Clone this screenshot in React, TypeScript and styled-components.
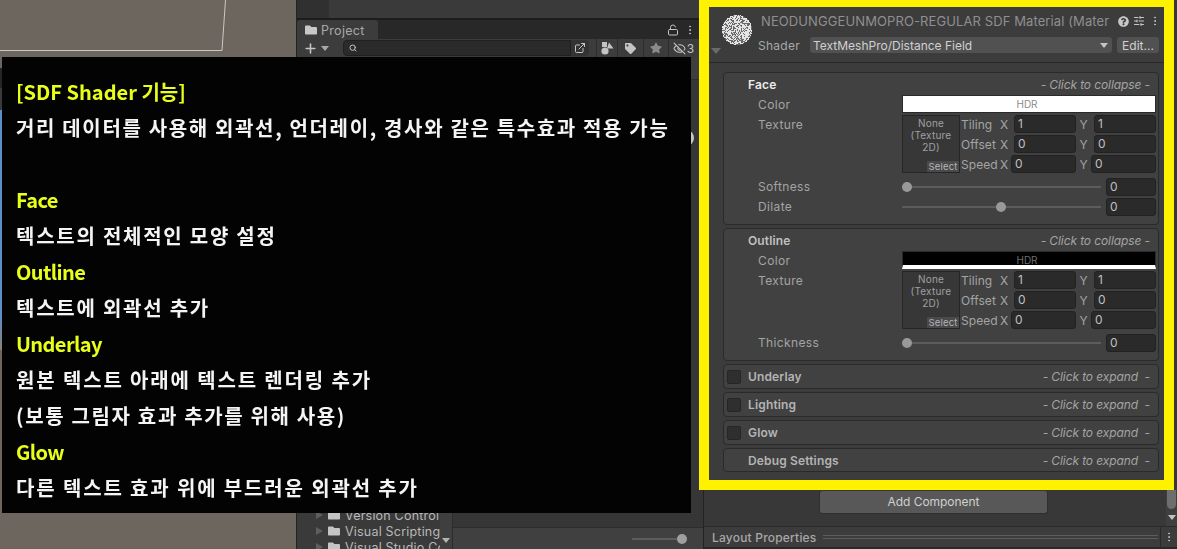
import React from "react";
import styled, { createGlobalStyle } from "styled-components";
import { FaFolder, FaQuestionCircle, FaStar, FaTag } from "react-icons/fa";
import {
  EllipsisVertical,
  ExternalLink,
  EyeOff,
  LockOpen,
  Plus,
  Search,
  SlidersHorizontal,
} from "lucide-react";

const GlobalStyle = createGlobalStyle`
  html, body {
    margin: 0;
    padding: 0;
    background: #383838;
  }
  * {
    box-sizing: border-box;
  }
`;

const Page = styled.div`
  position: relative;
  display: flex;
  width: 1177px;
  height: 549px;
  overflow: hidden;
  font-family: Inter, "Liberation Sans", sans-serif;
  font-size: 12px;
  color: #b4b4b4;
`;

/* scene view on the left */
const SceneColumn = styled.div`
  display: flex;
  flex-direction: column;
  width: 296px;
  flex-shrink: 0;
`;

const SceneTop = styled.div`
  height: 68px;
  background: #6c665f;
`;

const SceneLines = styled.svg`
  display: block;
`;

const SceneToolbar = styled.div`
  height: 42px;
  background: linear-gradient(#262626 0 20px, #3a3a3a 20px);
`;

const SceneSky = styled.div`
  height: 240px;
  background: linear-gradient(#5f8dc6 85%, #85837c);
`;

const SceneGround = styled.div`
  flex: 1;
  background: #6c665f;
`;

/* project window */
const ProjectColumn = styled.div`
  display: flex;
  flex-direction: column;
  width: 408px;
  flex-shrink: 0;
  background: #3a3a3a;
  border-left: 1px solid #232323;
  border-right: 1px solid #232323;
`;

const TopPanel = styled.div`
  height: 18px;
  background: #3a3a3a;
`;

const TopPanelTab = styled.div`
  width: 32px;
  height: 18px;
  background: #303030;
`;

const TabBar = styled.div`
  display: flex;
  align-items: center;
  height: 21px;
  background: #282828;
  border-top: 2px solid #1d1d1d;
  padding-right: 5px;
`;

const ProjectTab = styled.div`
  display: flex;
  align-items: center;
  gap: 4px;
  width: 81px;
  height: 19px;
  padding: 1px 0 0 8px;
  background: #3c3c3c;
  border-radius: 3px 3px 0 0;
  color: #a8a8a8;
  font-size: 12.5px;
  letter-spacing: 0.3px;
`;

const TabIcons = styled.div`
  display: flex;
  align-items: center;
  gap: 5px;
  margin-left: auto;
  margin-right: 2px;
  color: #c4c4c4;
`;

const Toolbar = styled.div`
  display: flex;
  align-items: center;
  height: 18px;
  padding-left: 6px;
  background: #3c3c3c;
  color: #c4c4c4;
`;

const Caret = styled.span<{ $size?: number; $color?: string }>`
  display: inline-block;
  width: 0;
  height: 0;
  flex-shrink: 0;
  border-left: ${({ $size = 4 }) => $size}px solid transparent;
  border-right: ${({ $size = 4 }) => $size}px solid transparent;
  border-top: ${({ $size = 4 }) => $size + 1}px solid ${({ $color = "#a8a8a8" }) => $color};
`;

const SearchField = styled.div`
  display: flex;
  align-items: center;
  width: 228px;
  height: 16px;
  margin-left: 14px;
  padding-left: 5px;
  background: #2a2a2a;
  border: 1px solid #202020;
  border-radius: 4px 0 0 4px;
`;

const SearchEnd = styled.div`
  display: flex;
  align-items: center;
  justify-content: center;
  width: 18px;
  height: 16px;
  background: #333333;
  border-radius: 0 4px 4px 0;
  color: #c8c8c8;
`;

const ToolbarGap = styled.span<{ $width: number }>`
  width: ${({ $width }) => $width}px;
  flex-shrink: 0;
`;

const FilterButton = styled.div<{ $width: number; $dim?: boolean }>`
  display: flex;
  align-items: center;
  justify-content: center;
  gap: 1px;
  width: ${({ $width }) => $width}px;
  height: 18px;
  border-left: 1px solid #2c2c2c;
  background: #3c3c3c;
  color: ${({ $dim }) => ($dim ? "#8a8a8a" : "#c4c4c4")};
  font-size: 12px;
`;

const ProjectBody = styled.div`
  flex: 1;
  display: flex;
`;

const TreePanel = styled.div`
  display: flex;
  flex-direction: column;
  justify-content: flex-end;
  width: 143px;
  padding-left: 19px;
  overflow: hidden;
`;

const TreeRow = styled.div<{ $last?: boolean }>`
  display: flex;
  align-items: center;
  gap: 5px;
  flex-shrink: 0;
  height: 16px;
  margin-bottom: ${({ $last }) => ($last ? "-6px" : "0")};
  color: #b8b8b8;
  font-size: 12.5px;
  white-space: nowrap;
  letter-spacing: 0.2px;
  svg {
    flex-shrink: 0;
  }
`;

const TreeArrow = styled.span`
  flex-shrink: 0;
  width: 0;
  height: 0;
  border-top: 4px solid transparent;
  border-bottom: 4px solid transparent;
  border-left: 7px solid #5e5e5e;
`;

const TreeScroll = styled.div`
  display: flex;
  flex-direction: column;
  justify-content: flex-end;
  align-items: center;
  width: 13px;
  padding-bottom: 6px;
  background: #3f3f3f;
  border-right: 1px solid #2c2c2c;
`;

const AssetPanel = styled.div`
  position: relative;
  flex: 1;
  display: flex;
  flex-direction: column;
  justify-content: space-between;
  background: #363636;
`;

const AssetHeader = styled.div`
  height: 23px;
  background: #3e3e3e;
  border-bottom: 1px solid #2c2c2c;
`;

const AssetKnob = styled.div`
  position: absolute;
  left: 225px;
  top: 73px;
  width: 16px;
  height: 16px;
  border-radius: 50%;
  background: #c8c8c8;
`;

const AssetFooter = styled.div`
  display: flex;
  align-items: center;
  justify-content: flex-end;
  height: 22px;
  padding-right: 21px;
  background: #404040;
  border-top: 1px solid #2c2c2c;
`;

const ZoomTrack = styled.div`
  position: relative;
  width: 50px;
  height: 2px;
  background: #5c5c5c;
`;

const ZoomKnob = styled.div`
  position: absolute;
  right: -5px;
  top: -4px;
  width: 10px;
  height: 10px;
  border-radius: 50%;
  background: #a0a0a0;
`;

/* inspector */
const InspectorColumn = styled.div`
  display: flex;
  flex-direction: column;
  width: 473px;
  flex-shrink: 0;
`;

const Frame = styled.div`
  position: relative;
  z-index: 1;
  width: 475px;
  height: 490px;
  margin-left: -5px;
  padding-bottom: 8px;
  background: #3c3c3c;
  border-style: solid;
  border-color: #fff200;
  border-width: 7px 10px 10px 10px;
`;

const MaterialHeader = styled.div`
  display: flex;
  height: 56px;
  padding-right: 5px;
  border-bottom: 1px solid #282828;
`;

const ThumbColumn = styled.div`
  display: flex;
  flex-direction: column;
  width: 49px;
  flex-shrink: 0;
  padding: 8px 0 0 2px;
`;

const NoiseThumb = styled.svg`
  display: block;
  margin: 0 0 3px 11px;
`;

const HeaderMain = styled.div`
  flex: 1;
  min-width: 0;
  padding-top: 5px;
`;

const TitleRow = styled.div`
  display: flex;
  align-items: center;
  height: 18px;
  padding-left: 3px;
  color: #8f8f8f;
  font-size: 13px;
  letter-spacing: 0.1px;
`;

const Title = styled.div`
  width: 349px;
  white-space: nowrap;
`;

const TitleIcons = styled.div`
  display: flex;
  align-items: center;
  gap: 4px;
  margin: 0 -2px 0 auto;
  color: #c8c8c8;
`;

const ShaderRow = styled.div`
  display: flex;
  align-items: center;
  height: 16px;
  margin-top: 7px;
  color: #a8a8a8;
`;

const ShaderLabel = styled.div`
  width: 52px;
  letter-spacing: 0.25px;
`;

const Dropdown = styled.div`
  display: flex;
  align-items: center;
  justify-content: space-between;
  width: 302px;
  height: 16px;
  padding: 0 4px 0 3px;
  background: #515151;
  border-radius: 3px;
  color: #d0d0d0;
`;

const EditButton = styled.div`
  display: flex;
  align-items: center;
  justify-content: center;
  width: 42px;
  height: 16px;
  margin-left: 5px;
  background: #515151;
  border-radius: 3px;
  color: #d0d0d0;
`;

const Groups = styled.div`
  display: flex;
  flex-direction: column;
  gap: 3px;
  margin: 9px 5px 0 14px;
`;

const Group = styled.div<{ $collapsed?: boolean; $height?: number }>`
  height: ${({ $collapsed, $height = 25 }) => ($collapsed ? `${$height}px` : "auto")};
  padding-bottom: ${({ $collapsed }) => ($collapsed ? "0" : "8px")};
  background: #414141;
  border: 1px solid #2a2a2a;
  border-radius: 4px;
`;

const GroupHead = styled.div<{ $height?: number }>`
  display: flex;
  align-items: center;
  height: ${({ $height = 22 }) => $height}px;
  padding: 0 8px 0 24px;
`;

const GroupTitle = styled.div<{ $color?: string }>`
  color: ${({ $color = "#b4b4b4" }) => $color};
  font-weight: 600;
  letter-spacing: 0.15px;
`;

const GroupHint = styled.div`
  margin-left: auto;
  color: #a4a4a4;
  font-style: italic;
  letter-spacing: -0.1px;
`;

const CheckBox = styled.div`
  width: 14px;
  height: 14px;
  margin: 0 7px 0 -21px;
  background: #2f2f2f;
  border: 1px solid #262626;
  border-radius: 2px;
`;

const PropRow = styled.div<{ $top?: number }>`
  display: grid;
  grid-template-columns: 178px 254px;
  margin-top: ${({ $top = 0 }) => $top}px;
`;

const PropLabel = styled.div<{ $line?: number }>`
  height: 18px;
  padding-left: 34px;
  line-height: ${({ $line = 18 }) => $line}px;
  color: #a4a4a4;
  letter-spacing: 0.36px;
`;

const ColorBar = styled.div<{ $dark?: boolean }>`
  height: 18px;
  padding-right: 4px;
  background: ${({ $dark }) => ($dark ? "#000000" : "#ffffff")};
  border: 1px solid #2a2a2a;
  border-bottom: ${({ $dark }) => ($dark ? "4px solid #ffffff" : "1px solid #2a2a2a")};
  color: ${({ $dark }) => ($dark ? "#6e6e6e" : "#8c8c8c")};
  font-size: 10px;
  line-height: 16px;
  text-align: center;
`;

const TextureBlock = styled.div`
  display: flex;
  gap: 1px;
`;

const TextureThumb = styled.div`
  position: relative;
  width: 58px;
  height: 58px;
  flex-shrink: 0;
  padding-top: 1px;
  background: #373737;
  border: 1px solid #262626;
  color: #a0a0a0;
  font-size: 10px;
  line-height: 12px;
  text-align: center;
  letter-spacing: 0.2px;
`;

const SelectTag = styled.div`
  position: absolute;
  right: 0;
  bottom: 0;
  width: 32px;
  height: 11px;
  background: #4a4a4a;
  color: #b4b4b4;
  font-size: 9.5px;
  line-height: 12px;
`;

const TilingRows = styled.div`
  flex: 1;
  display: flex;
  flex-direction: column;
  gap: 2px;
`;

const TilingRow = styled.div<{ $wide?: boolean }>`
  display: grid;
  grid-template-columns: ${({ $wide }) =>
    $wide ? "39px 11px 65px 15px 65px" : "39px 14px 62px 18px 62px"};
  align-items: center;
  height: 18px;
  color: #a4a4a4;
  letter-spacing: 0.05px;
`;

const NumberField = styled.div`
  height: 18px;
  padding-left: 3px;
  background: #2a2a2a;
  border: 1px solid #222222;
  border-radius: 3px;
  color: #c0c0c0;
  line-height: 16px;
`;

const AxisLabel = styled.span`
  color: #a4a4a4;
`;

const SliderLine = styled.div`
  display: flex;
  align-items: center;
  gap: 5px;
`;

const SliderTrack = styled.div`
  position: relative;
  flex: 1;
  height: 2px;
  background: #5c5c5c;
`;

const SliderKnob = styled.div<{ $left: number }>`
  position: absolute;
  left: ${({ $left }) => $left}%;
  top: -4px;
  width: 10px;
  height: 10px;
  margin-left: ${({ $left }) => ($left === 0 ? 0 : -6)}px;
  border-radius: 50%;
  background: #999999;
`;

const ValueBox = styled(NumberField)`
  width: 50px;
  flex-shrink: 0;
`;

const BelowFrame = styled.div`
  flex: 1;
  display: flex;
  background: #383838;
`;

const ButtonArea = styled.div`
  flex: 1;
  padding-right: 3px;
  text-align: center;
`;

const AddButton = styled.div`
  display: inline-block;
  width: 229px;
  height: 23px;
  margin-top: 1px;
  background: #585858;
  border: 1px solid #303030;
  border-top: 0;
  border-radius: 3px;
  color: #d0d0d0;
  line-height: 22px;
  letter-spacing: -0.05px;
`;

const ScrollStrip = styled.div`
  display: flex;
  flex-direction: column;
  align-items: center;
  width: 11px;
  background: #3f3f3f;
`;

const ScrollThumb = styled.div`
  width: 9px;
  height: 19px;
  background: #6e6e6e;
  border-radius: 0 0 5px 5px;
  margin-bottom: 6px;
`;

const LayoutBar = styled.div`
  display: flex;
  align-items: center;
  height: 23px;
  padding-left: 8px;
  background: #3c3c3c;
  border-top: 1px solid #2a2a2a;
  border-bottom: 2px solid #282828;
  color: #a8a8a8;
  font-weight: 500;
  letter-spacing: 0.2px;
`;

const GripLines = styled.div`
  flex: 1;
  height: 4px;
  margin: 0 2px 0 6px;
  border-top: 1px solid #5c5c5c;
  border-bottom: 1px solid #5c5c5c;
`;

const LayoutMenu = styled.div`
  display: flex;
  align-items: center;
  justify-content: center;
  width: 17px;
  height: 20px;
  border-left: 1px solid #2a2a2a;
  color: #c4c4c4;
`;

/* caption laid over the editor */
const Caption = styled.div`
  position: absolute;
  z-index: 2;
  left: 2px;
  top: 57px;
  width: 689px;
  height: 456px;
  padding: 17px 0 0 14px;
  background: #030303;
  font-family: "Noto Sans CJK KR", "Noto Sans", sans-serif;
  font-size: 20px;
  font-weight: 700;
  line-height: 36px;
  white-space: nowrap;
`;

const CaptionLine = styled.div<{ $accent?: boolean; $spacing: number }>`
  height: 36px;
  color: ${({ $accent }) => ($accent ? "#e8ff1a" : "#f4f4f4")};
  letter-spacing: ${({ $spacing }) => $spacing}px;
  filter: blur(0.3px);
`;

const noiseCells = (() => {
  const cells: { x: number; y: number; on: boolean }[] = [];
  let seed = 17;
  for (let y = 0; y < 30; y++) {
    for (let x = 0; x < 30; x++) {
      seed = (seed * 1103515245 + 12345) & 0x7fffffff;
      const inside = (x - 14.5) ** 2 + (y - 14.5) ** 2 < 15 * 15;
      if (inside) cells.push({ x, y, on: (seed >> 16) % 100 < 62 });
    }
  }
  return cells;
})();

const ShapesIcon = () => (
  <svg width="14" height="14" viewBox="0 0 14 14" fill="#c4c4c4">
    <rect x="2" y="1" width="5" height="5" />
    <path d="M9 1.5 L13.5 7.5 H7 Z" />
    <circle cx="5" cy="10" r="3.6" />
  </svg>
);

const TextureRows = () => (
  <TextureBlock>
    <TextureThumb>
      None
      <br />
      (Texture
      <br />
      2D)
      <SelectTag>Select</SelectTag>
    </TextureThumb>
    <TilingRows>
      <TilingRow>
        <span>Tiling</span>
        <AxisLabel>X</AxisLabel>
        <NumberField>1</NumberField>
        <AxisLabel>&nbsp;Y</AxisLabel>
        <NumberField>1</NumberField>
      </TilingRow>
      <TilingRow>
        <span>Offset</span>
        <AxisLabel>X</AxisLabel>
        <NumberField>0</NumberField>
        <AxisLabel>&nbsp;Y</AxisLabel>
        <NumberField>0</NumberField>
      </TilingRow>
      <TilingRow $wide>
        <span>Speed</span>
        <AxisLabel>X</AxisLabel>
        <NumberField>0</NumberField>
        <AxisLabel>&nbsp;Y</AxisLabel>
        <NumberField>0</NumberField>
      </TilingRow>
    </TilingRows>
  </TextureBlock>
);

const SliderRow = ({ label, left, top }: { label: string; left: number; top?: number }) => (
  <PropRow $top={top}>
    <PropLabel>{label}</PropLabel>
    <SliderLine>
      <SliderTrack>
        <SliderKnob $left={left} />
      </SliderTrack>
      <ValueBox>0</ValueBox>
    </SliderLine>
  </PropRow>
);

const CollapsedGroup = ({ title, check, height = 25 }: { title: string; check?: boolean; height?: number }) => (
  <Group $collapsed $height={height}>
    <GroupHead $height={height - 2}>
      {check && <CheckBox />}
      <GroupTitle>{title}</GroupTitle>
      <GroupHint>- Click to expand&nbsp; -</GroupHint>
    </GroupHead>
  </Group>
);

const captionLines: { text: string; accent?: boolean; spacing: number }[] = [
  { text: "[SDF Shader 기능]", accent: true, spacing: 0 },
  { text: "거리 데이터를 사용해 외곽선, 언더레이, 경사와 같은 특수효과 적용 가능", spacing: 1.65 },
  { text: "\u00a0", spacing: 0 },
  { text: "Face", accent: true, spacing: -0.6 },
  { text: "텍스트의 전체적인 모양 설정", spacing: 1.75 },
  { text: "Outline", accent: true, spacing: -0.6 },
  { text: "텍스트에 외곽선 추가", spacing: 1.75 },
  { text: "Underlay", accent: true, spacing: -0.6 },
  { text: "원본 텍스트 아래에 텍스트 렌더링 추가", spacing: 1.85 },
  { text: "(보통 그림자 효과 추가를 위해 사용)", spacing: 1.65 },
  { text: "Glow", accent: true, spacing: -0.6 },
  { text: "다른 텍스트 효과 위에 부드러운 외곽선 추가", spacing: 1.85 },
];

const App = () => (
  <Page>
    <GlobalStyle />
    <SceneColumn>
      <SceneTop>
        <SceneLines width="296" height="68" viewBox="0 0 296 68">
          <path d="M225.5 0 L222 50.5 H0" fill="none" stroke="#c8c8c4" strokeWidth="1" />
        </SceneLines>
      </SceneTop>
      <SceneToolbar />
      <SceneSky />
      <SceneGround />
    </SceneColumn>

    <ProjectColumn>
      <TopPanel>
        <TopPanelTab />
      </TopPanel>
      <TabBar>
        <ProjectTab>
          <FaFolder size={12} color="#c8c8c8" />
          Project
        </ProjectTab>
        <TabIcons>
          <LockOpen size={12} />
          <EllipsisVertical size={12} />
        </TabIcons>
      </TabBar>
      <Toolbar>
        <Plus size={15} strokeWidth={2.5} />
        <ToolbarGap $width={3} />
        <Caret />
        <SearchField>
          <Search size={8} strokeWidth={3} />
        </SearchField>
        <SearchEnd>
          <ExternalLink size={12} />
        </SearchEnd>
        <ToolbarGap $width={7} />
        <FilterButton $width={21}>
          <ShapesIcon />
        </FilterButton>
        <FilterButton $width={26}>
          <FaTag size={11} />
        </FilterButton>
        <FilterButton $width={25} $dim>
          <FaStar size={12} />
        </FilterButton>
        <FilterButton $width={30}>
          <EyeOff size={13} />3
        </FilterButton>
      </Toolbar>
      <ProjectBody>
        <TreePanel>
          <TreeRow>
            <TreeArrow />
            <FaFolder size={12} color="#c4c4c4" />
            Version Control
          </TreeRow>
          <TreeRow>
            <TreeArrow />
            <FaFolder size={12} color="#c4c4c4" />
            Visual Scripting
          </TreeRow>
          <TreeRow $last>
            <TreeArrow />
            <FaFolder size={12} color="#c4c4c4" />
            Visual Studio Code Editor
          </TreeRow>
        </TreePanel>
        <TreeScroll>
          <Caret $size={4} $color="#b4b4b4" />
        </TreeScroll>
        <AssetPanel>
          <AssetHeader />
          <AssetKnob />
          <AssetFooter>
            <ZoomTrack>
              <ZoomKnob />
            </ZoomTrack>
          </AssetFooter>
        </AssetPanel>
      </ProjectBody>
    </ProjectColumn>

    <InspectorColumn>
      <Frame>
        <MaterialHeader>
          <ThumbColumn>
            <NoiseThumb width="30" height="30" viewBox="0 0 30 30">
              {noiseCells.map((c) => (
                <rect
                  key={`${c.x}-${c.y}`}
                  x={c.x}
                  y={c.y}
                  width="1"
                  height="1"
                  fill={c.on ? "#e4e4e4" : "#6a6a6a"}
                />
              ))}
            </NoiseThumb>
            <Caret $size={5} $color="#6a6a6a" />
          </ThumbColumn>
          <HeaderMain>
            <TitleRow>
              <Title>NEODUNGGEUNMOPRO-REGULAR SDF Material (Mater</Title>
              <TitleIcons>
                <FaQuestionCircle size={11} />
                <SlidersHorizontal size={12} />
                <EllipsisVertical size={12} />
              </TitleIcons>
            </TitleRow>
            <ShaderRow>
              <ShaderLabel>Shader</ShaderLabel>
              <Dropdown>
                TextMeshPro/Distance Field
                <Caret $size={4} $color="#c4c4c4" />
              </Dropdown>
              <EditButton>Edit...</EditButton>
            </ShaderRow>
          </HeaderMain>
        </MaterialHeader>

        <Groups>
          <Group>
            <GroupHead>
              <GroupTitle $color="#ececec">Face</GroupTitle>
              <GroupHint>- Click to collapse -</GroupHint>
            </GroupHead>
            <PropRow>
              <PropLabel $line={20}>Color</PropLabel>
              <ColorBar>HDR</ColorBar>
            </PropRow>
            <PropRow $top={2}>
              <PropLabel $line={20}>Texture</PropLabel>
              <TextureRows />
            </PropRow>
            <SliderRow label="Softness" left={0} top={5} />
            <SliderRow label="Dilate" left={50} top={2} />
          </Group>

          <Group>
            <GroupHead>
              <GroupTitle $color="#c0c0c0">Outline</GroupTitle>
              <GroupHint>- Click to collapse -</GroupHint>
            </GroupHead>
            <PropRow>
              <PropLabel $line={20}>Color</PropLabel>
              <ColorBar $dark>HDR</ColorBar>
            </PropRow>
            <PropRow $top={2}>
              <PropLabel $line={20}>Texture</PropLabel>
              <TextureRows />
            </PropRow>
            <SliderRow label="Thickness" left={0} top={5} />
          </Group>

          <CollapsedGroup title="Underlay" check />
          <CollapsedGroup title="Lighting" check />
          <CollapsedGroup title="Glow" check />
          <CollapsedGroup title="Debug Settings" height={24} />
        </Groups>
      </Frame>

      <BelowFrame>
        <ButtonArea>
          <AddButton>Add Component</AddButton>
        </ButtonArea>
        <ScrollStrip>
          <ScrollThumb />
          <Caret $size={4} $color="#c4c4c4" />
        </ScrollStrip>
      </BelowFrame>
      <LayoutBar>
        Layout Properties
        <GripLines />
        <LayoutMenu>
          <EllipsisVertical size={12} />
        </LayoutMenu>
      </LayoutBar>
    </InspectorColumn>

    <Caption>
      {captionLines.map((line, i) => (
        <CaptionLine key={i} $accent={line.accent} $spacing={line.spacing}>
          {line.text}
        </CaptionLine>
      ))}
    </Caption>
  </Page>
);

export default App;
